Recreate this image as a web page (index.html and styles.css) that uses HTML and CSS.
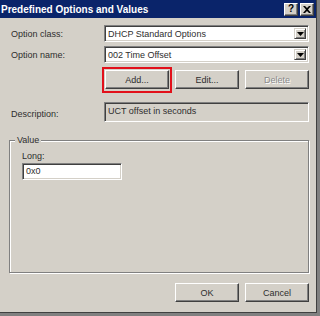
FILE: index.html
```html
<!DOCTYPE html>
<html>
<head>
<meta charset="utf-8">
<link rel="stylesheet" href="styles.css">
</head>
<body>
<div class="window">
  <div class="titlebar">
    <span class="title">Predefined Options and Values</span>
    <div class="ctrls">
      <span class="tbtn">?</span>
      <span class="tbtn">
        <svg width="8" height="7" viewBox="0 0 8 7"><path d="M0 0h2l2 2 2-2h2L5 3.5 8 7H6L4 5 2 7H0l3-3.5z" fill="#000"/></svg>
      </span>
    </div>
  </div>
  <div class="content">
    <div class="row">
      <span class="label">Option class:</span>
      <div class="combo"><span class="ctext">DHCP Standard Options</span><span class="drop"><svg width="7" height="4" viewBox="0 0 7 4"><path d="M0 0h7L3.5 4z" fill="#000"/></svg></span></div>
    </div>
    <div class="row row2">
      <span class="label">Option name:</span>
      <div class="combo"><span class="ctext">002 Time Offset</span><span class="drop"><svg width="7" height="4" viewBox="0 0 7 4"><path d="M0 0h7L3.5 4z" fill="#000"/></svg></span></div>
    </div>
    <div class="btnrow">
      <span class="btn">Add...</span>
      <span class="btn">Edit...</span>
      <span class="btn disabled">Delete</span>
    </div>
    <div class="row desc">
      <span class="label">Description:</span>
      <div class="field ro">UCT offset in seconds</div>
    </div>
    <div class="group">
      <span class="legend">Value</span>
      <div class="sublabel">Long:</div>
      <div class="field input">0x0</div>
    </div>
    <div class="okrow">
      <span class="btn">OK</span>
      <span class="btn">Cancel</span>
    </div>
  </div>
  <div class="highlight"></div>
</div>
</body>
</html>
```

FILE: styles.css
```css
html, body {
  margin: 0;
  padding: 0;
}
body {
  width: 320px;
  height: 316px;
  background: #808080;
  overflow: hidden;
  font-family: "Liberation Sans", Arial, sans-serif;
  font-size: 9px;
  color: #2e2e2e;
}
.window {
  position: relative;
  width: 317px;
  height: 313px;
  background: #d4d0c8;
  border-right: 1px solid #404040;
  border-bottom: 1px solid #404040;
  box-sizing: border-box;
}
.titlebar {
  height: 18px;
  background: #0a246a;
  display: flex;
  align-items: center;
  justify-content: space-between;
  padding-left: 1px;
  padding-right: 2px;
}
.title {
  color: #fff;
  font-weight: bold;
  font-size: 10px;
}
.ctrls {
  display: flex;
  gap: 2px;
}
.tbtn {
  width: 14px;
  height: 13px;
  box-sizing: border-box;
  background: #d4d0c8;
  border: 1px solid;
  border-color: #fff #404040 #404040 #fff;
  box-shadow: inset -1px -1px #808080;
  display: flex;
  align-items: center;
  justify-content: center;
  font-weight: bold;
  font-size: 10px;
  color: #000;
  line-height: 1;
}
.content {
  padding-top: 7px;
}
.row {
  display: flex;
  align-items: center;
}
.row2 {
  margin-top: 4px;
}
.label {
  width: 93px;
  margin-left: 11px;
}
.combo {
  width: 205px;
  height: 17px;
  box-sizing: border-box;
  background: #fff;
  border: 1px solid;
  border-color: #808080 #fff #fff #808080;
  box-shadow: inset 1px 1px #404040, inset -1px -1px #d4d0c8;
  display: flex;
  align-items: center;
  justify-content: space-between;
  padding: 2px 2px 2px 3px;
}
.drop {
  width: 12px;
  height: 11px;
  box-sizing: border-box;
  background: #d4d0c8;
  border: 1px solid;
  border-color: #d4d0c8 #404040 #404040 #d4d0c8;
  box-shadow: inset 1px 1px #fff, inset -1px -1px #808080;
  display: flex;
  align-items: center;
  justify-content: center;
}
.btnrow {
  display: flex;
  gap: 6px;
  margin-top: 7px;
  padding-left: 105px;
}
.btn {
  width: 64px;
  height: 19px;
  box-sizing: border-box;
  background: #d4d0c8;
  border: 1px solid;
  border-color: #fff #404040 #404040 #fff;
  box-shadow: inset -1px -1px #808080;
  display: flex;
  align-items: center;
  justify-content: center;
}
.btn.disabled {
  color: #8a8a8a;
  text-shadow: 1px 1px 0 #fff;
}
.desc {
  margin-top: 13px;
}
.field {
  box-sizing: border-box;
  border: 1px solid;
  border-color: #808080 #fff #fff #808080;
  box-shadow: inset 1px 1px #404040, inset -1px -1px #d4d0c8;
}
.ro {
  width: 205px;
  height: 20px;
  padding: 3px 3px 0;
  background: #d4d0c8;
  align-self: flex-start;
}
.desc .label {
  padding-top: 3px;
}
.group {
  margin: 18px 0 0 9px;
  width: 300px;
  height: 133px;
  box-sizing: border-box;
  border: 1px solid #808080;
  box-shadow: 1px 1px 0 #fff, inset 1px 1px 0 #fff;
  padding-left: 12px;
}
.legend {
  display: block;
  width: fit-content;
  margin: -6px 0 0 -7px;
  padding: 0 2px;
  background: #d4d0c8;
  line-height: 11px;
}
.sublabel {
  margin-top: 5px;
  line-height: 11px;
}
.input {
  margin-top: 1px;
  width: 100px;
  height: 17px;
  background: #fff;
  padding: 2px 3px 0;
  line-height: 11px;
}
.okrow {
  display: flex;
  justify-content: flex-end;
  gap: 6px;
  margin-top: 10px;
  padding-right: 7px;
}
.highlight {
  position: absolute;
  left: 102px;
  top: 67px;
  width: 70px;
  height: 26px;
  box-sizing: border-box;
  border: 2px solid #e2101a;
}
```
